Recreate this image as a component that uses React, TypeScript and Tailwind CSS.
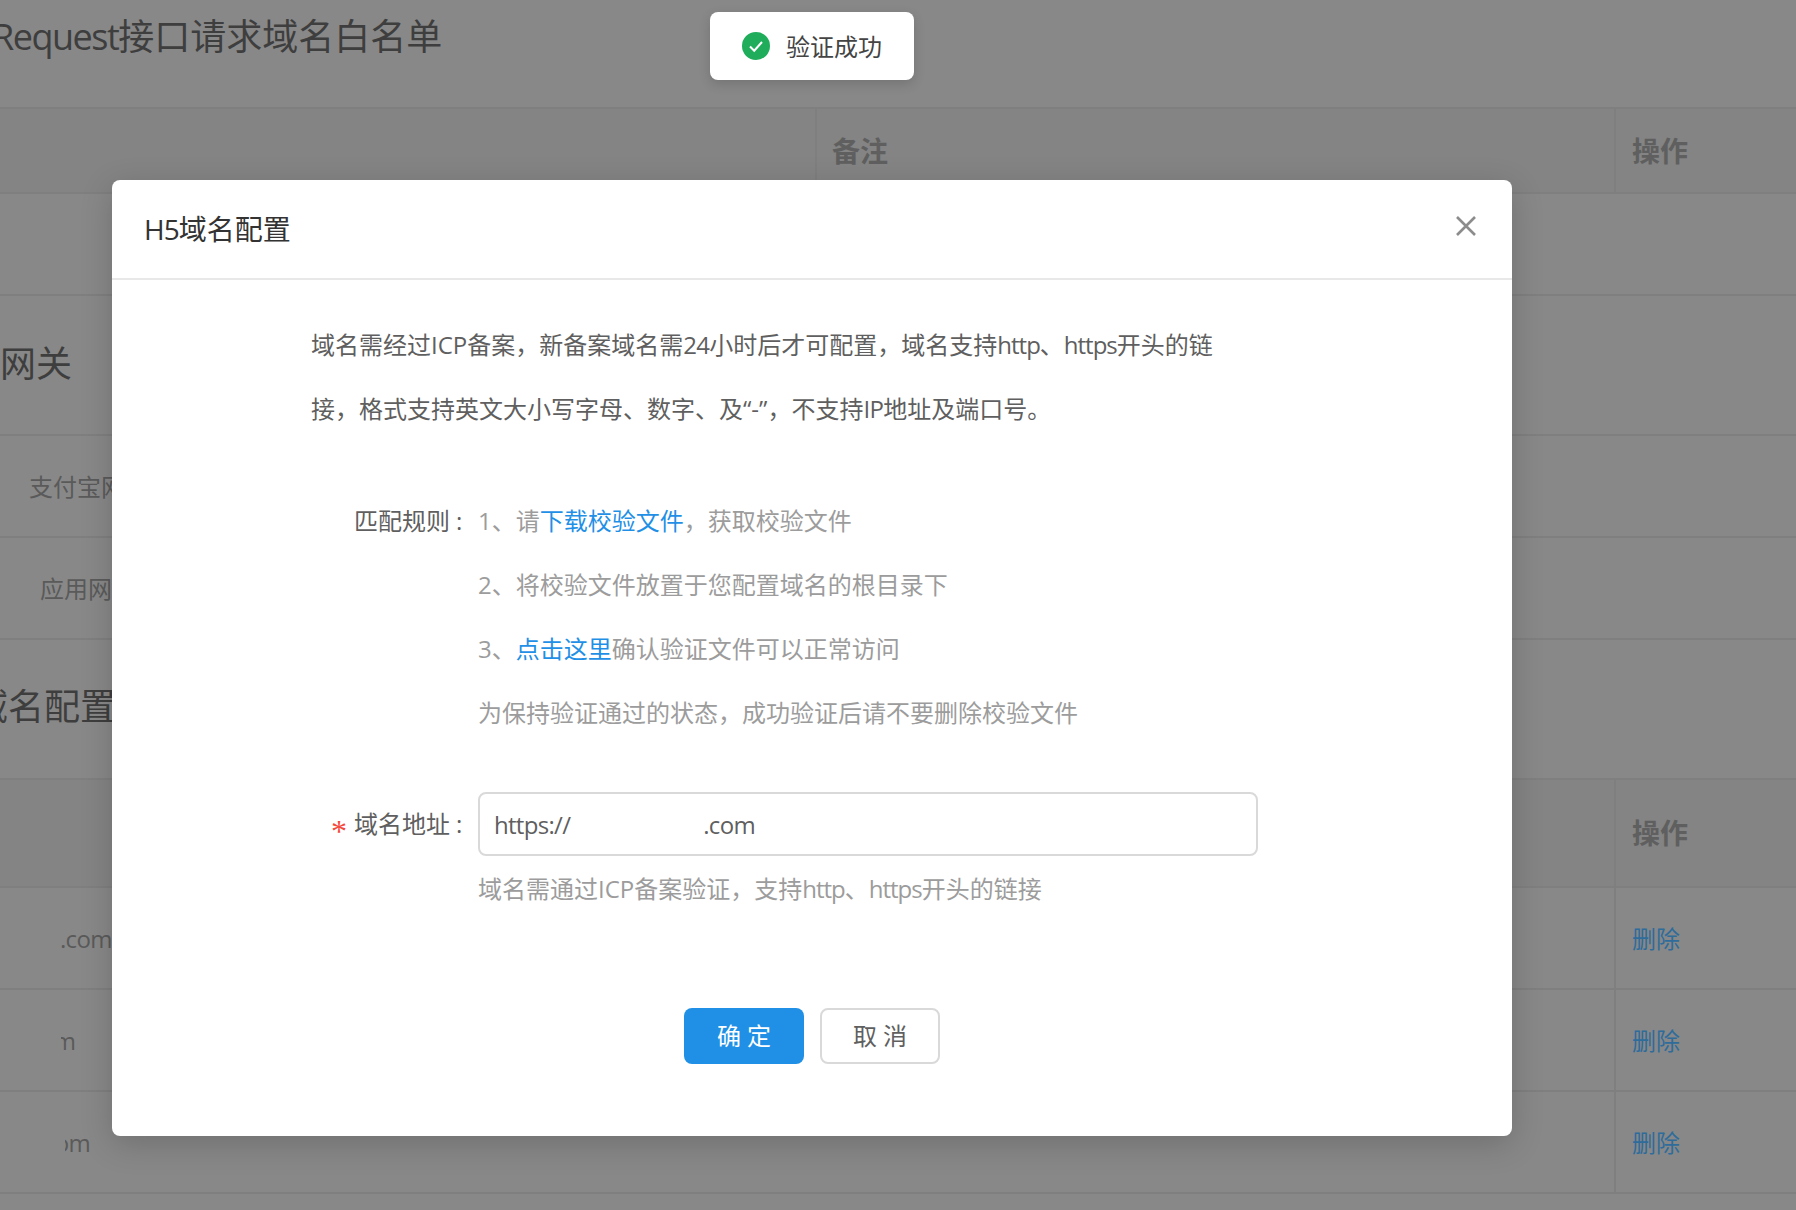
import React from "react";

const L = ({ children }: { children: React.ReactNode }) => <span className="tracking-[-0.7px]">{children}</span>;
const H = ({ children }: { children: React.ReactNode }) => <span className="tracking-[-1px]">{children}</span>;

const Del = () => <span className="text-[#2e6c9b]">删除</span>;

function TableRow({ left }: { left?: React.ReactNode }) {
  return (
    <div className="flex h-[102px] border-b-2 border-[#7f7f7f]">
      <div className="w-[112px] flex items-center pt-[2px]">{left}</div>
      <div className="flex-1" />
      <div className="w-[182px] border-l-2 border-[#7f7f7f] flex items-center pl-[16px] pt-[2px] text-[24px] leading-[32px]">
        <Del />
      </div>
    </div>
  );
}

function Background() {
  return (
    <div className="text-[#5a5a5a]">
      <div className="h-[107px] pt-[12px] -ml-[8px] whitespace-nowrap text-[36px] leading-[50px] text-[#3e3e3e]"><span className="tracking-[-1.5px]">Request</span>接口请求域名白名单</div>
      <div className="h-[87px] flex bg-[#848484] border-y-2 border-[#7f7f7f] text-[28px] font-bold text-[#5f5f5f]">
        <div className="w-[815px]" />
        <div className="flex-1 border-l-2 border-[#7f7f7f] pl-[15px] flex items-center">备注</div>
        <div className="w-[182px] border-l-2 border-[#7f7f7f] pl-[16px] flex items-center">操作</div>
      </div>
      <div className="h-[102px] border-b-2 border-[#7f7f7f]" />
      <div className="h-[140px] border-b-2 border-[#7f7f7f] pt-[43px] text-[36px] leading-[50px] text-[#3e3e3e]">网关</div>
      <div className="h-[102px] border-b-2 border-[#7f7f7f] flex items-center pl-[29px] pt-[2px] text-[24px] whitespace-nowrap">支付宝网</div>
      <div className="h-[102px] border-b-2 border-[#7f7f7f] flex items-center pl-[40px] pt-[2px] text-[24px] whitespace-nowrap">应用网</div>
      <div className="h-[140px] border-b-2 border-[#7f7f7f] pt-[42px] -ml-[28px] whitespace-nowrap text-[36px] leading-[50px] text-[#3e3e3e]">域名配置</div>
      <div className="h-[108px] flex bg-[#848484] border-b-2 border-[#7f7f7f] text-[28px] font-bold text-[#5f5f5f]">
        <div className="flex-1" />
        <div className="w-[182px] border-l-2 border-[#7f7f7f] pl-[16px] flex items-center">操作</div>
      </div>
      <TableRow left={<span className="ml-[60px] text-[24px] tracking-[-0.7px]">.com</span>} />
      <TableRow left={<span className="ml-[61px] text-[24px] w-[15px] flex justify-end overflow-hidden">m</span>} />
      <TableRow left={<span className="ml-[65px] text-[24px] w-[25px] flex justify-end overflow-hidden tracking-[-0.7px]">om</span>} />
    </div>
  );
}

function Toast() {
  return (
    <div className="absolute top-[12px] left-[710px] z-20 w-[204px] h-[68px] bg-white rounded-[8px] shadow-[0_4px_12px_rgba(0,0,0,0.15)] flex items-center pl-[32px] gap-[16px] text-[24px] text-[#444]">
      <svg width="28" height="28" viewBox="0 0 28 28" className="shrink-0">
        <circle cx="14" cy="14" r="14" fill="#1fad5c" />
        <path d="M8 14.5l4.2 4.2L20 10" fill="none" stroke="#fff" strokeWidth="2" />
      </svg>
      <span className="pt-[2px]">验证成功</span>
    </div>
  );
}

function Label({ children, required }: { children: React.ReactNode; required?: boolean }) {
  return (
    <div className="w-[166px] shrink-0 flex justify-end items-center h-[64px] text-[#5f5f5f] whitespace-nowrap">
      {required && <span className="text-[#f5483b] mr-[7px] text-[32px] leading-none mt-[14px] font-['Liberation_Serif']">*</span>}
      <span>{children}</span>
      <span className="ml-[6px] mr-[16px] w-[6px]">:</span>
    </div>
  );
}

function Modal() {
  return (
    <div className="w-[1400px] h-[956px] bg-white rounded-[8px] shadow-[0_8px_32px_rgba(0,0,0,0.18)] text-[24px]">
      <div className="h-[100px] border-b-2 border-[#e8e8e8] flex justify-between pl-[32px] pr-[36px]">
        <div className="text-[28px] leading-[40px] pt-[29px] text-[#333]"><span className="tracking-[-1px]">H5</span>域名配置</div>
        <svg width="20" height="20" viewBox="0 0 20 20" className="mt-[36px]">
          <path d="M1 1l18 18M19 1L1 19" stroke="#8c8c8c" strokeWidth="2.6" fill="none" />
        </svg>
      </div>
      <div className="pl-[199px] pt-[33px] w-[1112px] leading-[64px] text-[#5f5f5f]">
        域名需经过ICP备案，新备案域名需<L>24</L>小时后才可配置，域名支持<H>http</H>、<H>https</H>开头的链接，格式支持英文大小写字母、数字、及“-”，不支持<L>IP</L>地址及端口号。
      </div>
      <div className="flex pl-[200px] mt-[48px] leading-[64px]">
        <Label>匹配规则</Label>
        <div className="text-[#9c9c9c]">
          <div>1、请<span className="text-[#1f90e6]">下载校验文件</span>，获取校验文件</div>
          <div>2、将校验文件放置于您配置域名的根目录下</div>
          <div>3、<span className="text-[#1f90e6]">点击这里</span>确认验证文件可以正常访问</div>
          <div>为保持验证通过的状态，成功验证后请不要删除校验文件</div>
        </div>
      </div>
      <div className="flex pl-[200px] mt-[47px]">
        <Label required>域名地址</Label>
        <div>
          <div className="w-[780px] h-[64px] border-2 border-[#d9d9d9] rounded-[8px] flex items-center pl-[14px] pt-[2px] text-[#5f5f5f]">
            <L>https://</L>
            <span className="ml-[133px]"><L>.com</L></span>
          </div>
          <div className="mt-[8px] leading-[50px] text-[#9c9c9c]">域名需通过ICP备案验证，支持<H>http</H>、<H>https</H>开头的链接</div>
        </div>
      </div>
      <div className="flex justify-center gap-[16px] mt-[94px]">
        <button className="w-[120px] h-[56px] rounded-[8px] bg-[#1f90e6] text-white">确 定</button>
        <button className="w-[120px] h-[56px] rounded-[8px] border-2 border-[#d9d9d9] text-[#5f5f5f]">取 消</button>
      </div>
    </div>
  );
}

export default function App() {
  return (
    <div className="relative w-[1796px] h-[1210px] overflow-hidden bg-[#888888] font-['Open_Sans','Noto_Sans_CJK_SC',sans-serif]">
      <Background />
      <Toast />
      <div className="absolute inset-0 z-10 pt-[180px] pl-[112px]">
        <Modal />
      </div>
    </div>
  );
}
